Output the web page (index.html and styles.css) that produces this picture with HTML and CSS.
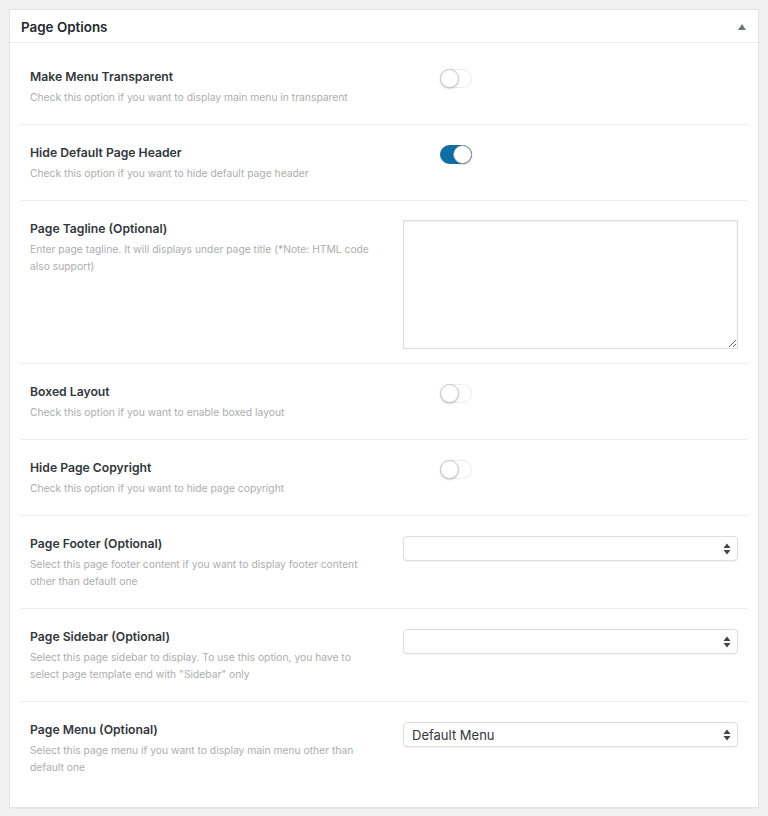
FILE: index.html
```html
<!DOCTYPE html>
<html>
<head>
<meta charset="utf-8">
<link rel="stylesheet" href="styles.css">
</head>
<body>
<div class="panel">
  <div class="panel-header">
    <h2 class="panel-title">Page Options</h2>
    <span class="collapse-arrow"></span>
  </div>
  <div class="panel-body">
    <div class="row">
      <div class="info">
        <div class="label">Make Menu Transparent</div>
        <div class="desc">Check this option if you want to display main menu in transparent</div>
      </div>
      <div class="control"><span class="toggle"><span class="knob"></span></span></div>
    </div>
    <div class="row">
      <div class="info">
        <div class="label">Hide Default Page Header</div>
        <div class="desc">Check this option if you want to hide default page header</div>
      </div>
      <div class="control"><span class="toggle on"><span class="knob"></span></span></div>
    </div>
    <div class="row">
      <div class="info">
        <div class="label">Page Tagline (Optional)</div>
        <div class="desc">Enter page tagline. It will displays under page title (*Note: HTML code also support)</div>
      </div>
      <div class="control"><textarea class="textarea"></textarea></div>
    </div>
    <div class="row">
      <div class="info">
        <div class="label">Boxed Layout</div>
        <div class="desc">Check this option if you want to enable boxed layout</div>
      </div>
      <div class="control"><span class="toggle"><span class="knob"></span></span></div>
    </div>
    <div class="row">
      <div class="info">
        <div class="label">Hide Page Copyright</div>
        <div class="desc">Check this option if you want to hide page copyright</div>
      </div>
      <div class="control"><span class="toggle"><span class="knob"></span></span></div>
    </div>
    <div class="row">
      <div class="info">
        <div class="label">Page Footer (Optional)</div>
        <div class="desc">Select this page footer content if you want to display footer content other than default one</div>
      </div>
      <div class="control">
        <div class="select"><span class="select-text"></span>
          <svg class="select-arrows" width="8" height="12" viewBox="0 0 8 12"><path d="M4 0.5L7.5 5H0.5Z M4 11.5L7.5 7H0.5Z" fill="#444"/></svg>
        </div>
      </div>
    </div>
    <div class="row">
      <div class="info">
        <div class="label">Page Sidebar (Optional)</div>
        <div class="desc">Select this page sidebar to display. To use this option, you have to select page template end with "Sidebar" only</div>
      </div>
      <div class="control">
        <div class="select"><span class="select-text"></span>
          <svg class="select-arrows" width="8" height="12" viewBox="0 0 8 12"><path d="M4 0.5L7.5 5H0.5Z M4 11.5L7.5 7H0.5Z" fill="#444"/></svg>
        </div>
      </div>
    </div>
    <div class="row last">
      <div class="info">
        <div class="label">Page Menu (Optional)</div>
        <div class="desc">Select this page menu if you want to display main menu other than default one</div>
      </div>
      <div class="control">
        <div class="select"><span class="select-text">Default Menu</span>
          <svg class="select-arrows" width="8" height="12" viewBox="0 0 8 12"><path d="M4 0.5L7.5 5H0.5Z M4 11.5L7.5 7H0.5Z" fill="#444"/></svg>
        </div>
      </div>
    </div>
  </div>
</div>
</body>
</html>
```

FILE: styles.css
```css
* { box-sizing: border-box; }
html, body { margin: 0; padding: 0; }
body {
  background: #f1f1f1;
  padding: 9px;
  font-family: "Inter", "Open Sans", sans-serif;
  color: #23282d;
}
.panel {
  width: 750px;
  background: #fff;
  border: 1px solid #e5e5e5;
  box-shadow: 0 1px 1px rgba(0,0,0,0.04);
}
.panel-header {
  height: 33px;
  border-bottom: 1px solid #eee;
  display: flex;
  align-items: center;
  justify-content: space-between;
  padding: 1px 12px 0 11px;
}
.panel-title {
  margin: 0;
  font-size: 13.4px;
  font-weight: 600;
  color: #23282d;
}
.collapse-arrow {
  width: 0; height: 0;
  border-left: 4px solid transparent;
  border-right: 4px solid transparent;
  border-bottom: 6px solid #72777c;
}
.panel-body {
  padding: 6px 10px 13px;
}
.row {
  display: grid;
  grid-template-columns: 1fr 335px;
  column-gap: 18px;
  padding: 18px 10px 18px;
  border-bottom: 1px solid #eee;
}
.row.last { border-bottom: 0; }
.label {
  font-size: 12.2px;
  font-weight: 600;
  line-height: 20px;
  margin-bottom: 2px;
  color: #32373c;
}
.desc {
  font-size: 10.3px;
  line-height: 17px;
  color: #adadad;
  padding-right: 4px;
}
.control { display: flex; align-items: flex-start; }
.toggle {
  margin: 2px 0 0 37px;
  position: relative;
  width: 32px;
  height: 19px;
  border-radius: 10px;
  border: 1px solid #ececec;
  background: #fff;
  display: block;
}
.toggle .knob {
  position: absolute;
  top: -1px; left: -1px;
  width: 19px; height: 19px;
  border-radius: 50%;
  background: #fff;
  border: 1px solid #c8c8c8;
  box-shadow: 0 1px 2px rgba(0,0,0,0.18);
}
.toggle.on {
  background: #0d6ea6;
  border-color: #0d6ea6;
}
.toggle.on .knob {
  left: auto;
  right: -1px;
  border-color: #8a9aa6;
}
.textarea {
  display: block;
  margin: 1px 0 -4px;
  width: 335px;
  height: 129px;
  border: 1px solid #ddd;
  box-shadow: inset 0 1px 2px rgba(0,0,0,0.07);
  background: #fff;
  resize: both;
  font-family: inherit;
}
.select {
  position: relative;
  margin-top: 2px;
  width: 335px;
  height: 25px;
  border: 1px solid #ddd;
  border-radius: 4px;
  background: #fff;
  box-shadow: 0 1px 1px rgba(0,0,0,0.05);
  padding: 0 8px;
  display: flex;
  align-items: center;
}
.select-text {
  font-size: 13px;
  color: #32373c;
}
.select-arrows {
  position: absolute;
  right: 6px;
  top: 6px;
}
```
